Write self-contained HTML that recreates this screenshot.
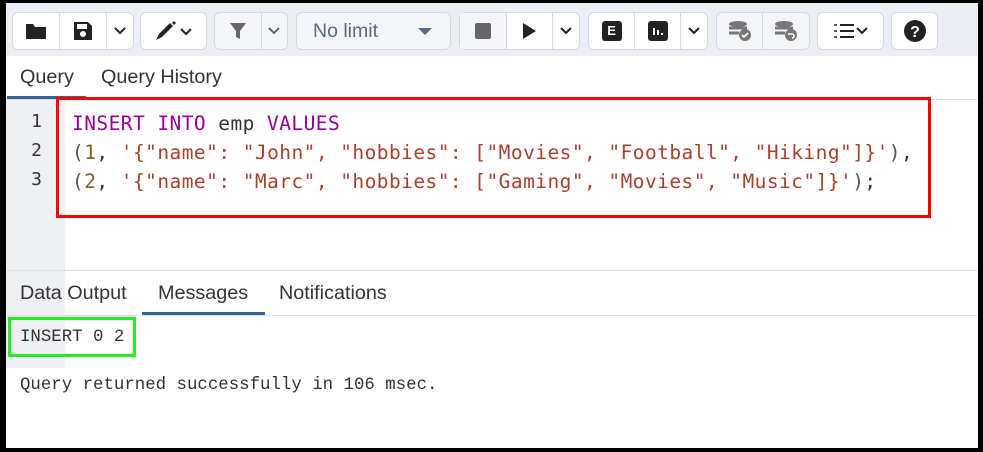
<!DOCTYPE html>
<html><head><style>
*{box-sizing:border-box;margin:0;padding:0}
body{width:983px;height:452px;background:#000;position:relative;overflow:hidden;font-family:"Liberation Sans",sans-serif}
#f{position:absolute;left:6px;top:3px;width:972px;height:445px;background:#fff;overflow:hidden}
#tb{position:absolute;left:0;top:0;width:972px;height:53px;background:#ebeef3}
.g{position:absolute;top:9px;height:38px;border:1px solid #d5dae2;border-radius:6px;background:#fff;display:flex}
.g.d{background:#f3f5f8}
.b{height:36px;border-right:1px solid #d5dae2;display:flex;align-items:center;justify-content:center}
.b:last-child{border-right:none}
.t{position:absolute;font-size:19.8px;color:#333}
.ln{position:absolute;top:0;left:0;width:59px;height:268px;background:#eef0f4}
pre{font-family:"DejaVu Sans Mono",monospace;font-size:19.5px;line-height:29px;position:absolute;left:66px;top:105px;color:#333;letter-spacing:0.45px}
.k{color:#990099}.s{color:#a8402e}.n{color:#8a5a2a}.p{color:#555}
.num{position:absolute;left:0;width:36px;text-align:right;font-family:"DejaVu Sans Mono",monospace;font-size:18px;color:#333}
</style></head><body>
<div id="f">
<div id="tb">
 <div class="g" style="left:6px;width:122px">
  <div class="b" style="width:47px"><svg width="22" height="18"><path d="M1 2h7l2 3h11v12H1z" fill="#222"/></svg></div>
  <div class="b" style="width:47px"><svg width="20" height="20"><path d="M1 1h14l4 4v14H1z" fill="#222"/><rect x="4" y="3" width="10" height="5" fill="#fff"/><circle cx="10" cy="13" r="3" fill="#fff"/></svg></div>
  <div class="b" style="width:26px"><svg width="12" height="8"><path d="M1 1l5 5 5-5" stroke="#222" stroke-width="2" fill="none"/></svg></div>
 </div>
 <div class="g" style="left:134px;width:67px">
  <div class="b" style="width:67px"><svg width="40" height="22"><path d="M2 20l3-6 11-11 3 3-11 11z" fill="#222"/><path d="M18 3l2-2 2 2-2 2" fill="#222"/><path d="M27 9l5 5 5-5" stroke="#222" stroke-width="2" fill="none"/></svg></div>
 </div>
 <div class="g d" style="left:208px;width:74px">
  <div class="b" style="width:48px"><svg width="18" height="20"><path d="M1 2h16l-6 8v8l-4-2v-6z" fill="#666"/></svg></div>
  <div class="b" style="width:26px"><svg width="12" height="8"><path d="M1 1l5 5 5-5" stroke="#666" stroke-width="2" fill="none"/></svg></div>
 </div>
 <div class="g d" style="left:290px;width:155px"><span style="position:absolute;left:16px;top:7px;font-size:19.5px;color:#5a6a86">No limit</span><svg style="position:absolute;left:121px;top:15px" width="14" height="8"><path d="M0 0h14l-7 7z" fill="#5a6a86"/></svg></div>
 <div class="g" style="left:453px;width:121px">
  <div class="b d" style="width:47px;background:#f3f5f8"><div style="width:16px;height:16px;background:#666;border-radius:2px"></div></div>
  <div class="b" style="width:47px"><svg width="16" height="18"><path d="M2 1l13 8-13 8z" fill="#222"/></svg></div>
  <div class="b" style="width:26px"><svg width="12" height="8"><path d="M1 1l5 5 5-5" stroke="#222" stroke-width="2" fill="none"/></svg></div>
 </div>
 <div class="g" style="left:582px;width:120px">
  <div class="b" style="width:47px"><div style="width:20px;height:20px;background:#222;border-radius:3px;color:#fff;font-size:13px;font-weight:bold;text-align:center;line-height:20px">E</div></div>
  <div class="b" style="width:47px"><svg width="20" height="20"><rect width="20" height="20" rx="3" fill="#222"/><path d="M6 7v7M10 9v5M14 12v2" stroke="#fff" stroke-width="2"/></svg></div>
  <div class="b" style="width:26px"><svg width="12" height="8"><path d="M1 1l5 5 5-5" stroke="#222" stroke-width="2" fill="none"/></svg></div>
 </div>
 <div class="g d" style="left:710px;width:94px">
  <div class="b" style="width:47px"><svg width="24" height="22"><ellipse cx="10" cy="4" rx="9" ry="3" fill="#777"/><path d="M1 8h18M1 13h10" stroke="#777" stroke-width="3"/><circle cx="17" cy="15" r="6" fill="#777"/><path d="M14 15l2 2 4-4" stroke="#fff" stroke-width="1.6" fill="none"/></svg></div>
  <div class="b" style="width:47px"><svg width="24" height="22"><ellipse cx="10" cy="4" rx="9" ry="3" fill="#777"/><path d="M1 8h18M1 13h10" stroke="#777" stroke-width="3"/><circle cx="17" cy="15" r="6" fill="#777"/><path d="M14 14h4a2 2 0 010 4" stroke="#fff" stroke-width="1.6" fill="none"/></svg></div>
 </div>
 <div class="g" style="left:811px;width:67px">
  <div class="b" style="width:67px"><svg width="36" height="18"><path d="M7 3h14M7 9h14M7 15h14" stroke="#222" stroke-width="2"/><path d="M1 3h3M1 9h3M1 15h3" stroke="#222" stroke-width="1.5"/><path d="M24 6l5 5 5-5" stroke="#222" stroke-width="2" fill="none"/></svg></div>
 </div>
 <div class="g" style="left:885px;width:47px">
  <div class="b" style="width:47px"><svg width="22" height="22"><circle cx="11" cy="11" r="11" fill="#222"/><text x="11" y="17" text-anchor="middle" font-family="Liberation Sans" font-weight="bold" font-size="16" fill="#fff">?</text></svg></div>
 </div>
</div>
<div class="t" style="left:14px;top:63px">Query</div>
<div class="t" style="left:95px;top:63px">Query History</div>
<div style="position:absolute;left:1px;top:93px;width:79px;height:3px;background:#326690"></div>
<div style="position:absolute;left:0;top:96px;width:972px;height:1px;background:#dde1e6"></div>
<div style="position:absolute;left:0;top:97px;width:972px;height:170px">
 <div class="ln"></div>
 <div class="num" style="top:11px">1</div><div class="num" style="top:40px">2</div><div class="num" style="top:69px">3</div>
</div>
<pre style="top:106px"><span class="k">INSERT INTO</span> emp <span class="k">VALUES</span>
<span class="p">(</span><span class="n">1</span>, <span class="s">'{"name": "John", "hobbies": ["Movies", "Football", "Hiking"]}'</span><span class="p">)</span>,
<span class="p">(</span><span class="n">2</span>, <span class="s">'{"name": "Marc", "hobbies": ["Gaming", "Movies", "Music"]}'</span><span class="p">)</span>;</pre>
<div style="position:absolute;left:50px;top:94px;width:875px;height:121px;border:3px solid #ff0000"></div>
<div style="position:absolute;left:0;top:267px;width:972px;height:1px;background:#dde1e6"></div>
<div class="t" style="left:14px;top:279px">Data Output</div>
<div class="t" style="left:152px;top:279px">Messages</div>
<div class="t" style="left:273px;top:279px">Notifications</div>
<div style="position:absolute;left:136px;top:309px;width:123px;height:3px;background:#326690"></div>
<div style="position:absolute;left:0;top:312px;width:972px;height:1px;background:#dde1e6"></div>
<div style="position:absolute;left:2px;top:314px;width:128px;height:40px;border:3px solid #22ee22"></div>
<div style="position:absolute;left:14px;top:325px;font-family:'Liberation Mono',monospace;font-size:17.4px;color:#333">INSERT 0 2</div>
<div style="position:absolute;left:14px;top:373px;font-family:'Liberation Mono',monospace;font-size:17.4px;color:#333">Query returned successfully in 106 msec.</div>
</div>
</body></html>
